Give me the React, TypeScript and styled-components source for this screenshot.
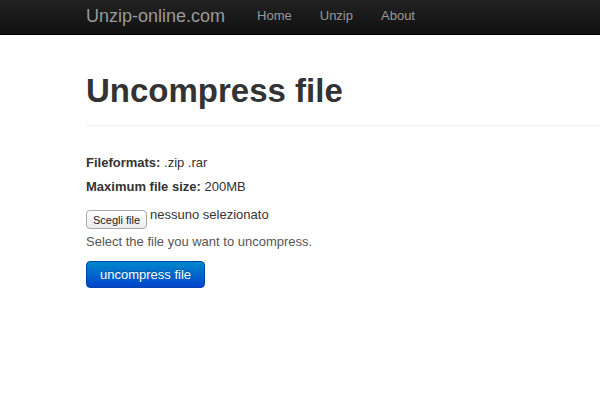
import styled, { createGlobalStyle } from 'styled-components';

const GlobalStyle = createGlobalStyle`
  html, body {
    margin: 0;
    padding: 0;
    background: #fff;
  }
  body {
    font-family: "Liberation Sans", Arial, sans-serif;
    font-size: 13px;
    line-height: 20px;
    color: #333;
  }
`;

const Navbar = styled.div`
  height: 34px;
  background: linear-gradient(to bottom, #222 0%, #111 100%);
  border-bottom: 1px solid #000;
  display: flex;
  align-items: center;
  padding-left: 86px;
`;

const Brand = styled.a`
  color: #999;
  font-size: 18px;
  font-weight: 200;
  text-decoration: none;
  margin-right: 18px;
  padding-bottom: 3px;
`;

const NavLink = styled.a`
  color: #999;
  font-size: 13px;
  text-decoration: none;
  padding: 0 14px 3px;
`;

const Container = styled.div`
  padding-left: 86px;
`;

const PageHeader = styled.div`
  padding: 36px 0 14px;
  border-bottom: 1px solid #eee;
  margin-bottom: 27px;
`;

const Title = styled.h1`
  margin: 0;
  font-size: 33px;
  line-height: 40px;
  font-weight: bold;
  color: #333;
`;

const Info = styled.p`
  margin: 0 0 4px;
`;

const FileRow = styled.div`
  display: flex;
  align-items: flex-start;
  margin-top: 10px;
`;

const FileButton = styled.button`
  font-family: "Liberation Sans", Arial, sans-serif;
  font-size: 11px;
  height: 19px;
  padding: 0 6px;
  margin-top: 3px;
  background: linear-gradient(to bottom, #fff 0%, #ececec 100%);
  border: 1px solid #aaa;
  border-radius: 4px;
  color: #222;
`;

const FileLabel = styled.span`
  margin-left: 3px;
  line-height: 16px;
`;

const Help = styled.p`
  margin: 3px 0 9px;
  color: #555;
`;

const PrimaryButton = styled.button`
  font-family: "Liberation Sans", Arial, sans-serif;
  font-size: 13px;
  height: 27px;
  padding: 0 13px;
  color: #fff;
  background: linear-gradient(to bottom, #0088cc 0%, #0044cc 100%);
  border: 1px solid #0044aa;
  border-radius: 4px;
  text-shadow: 0 -1px 0 rgba(0, 0, 0, 0.25);
`;

export default function App() {
  return (
    <>
      <GlobalStyle />
      <Navbar>
        <Brand href="#">Unzip-online.com</Brand>
        <NavLink href="#">Home</NavLink>
        <NavLink href="#">Unzip</NavLink>
        <NavLink href="#">About</NavLink>
      </Navbar>
      <Container>
        <PageHeader>
          <Title>Uncompress file</Title>
        </PageHeader>
        <Info>
          <b>Fileformats:</b> .zip .rar
        </Info>
        <Info>
          <b>Maximum file size:</b> 200MB
        </Info>
        <FileRow>
          <FileButton>Scegli file</FileButton>
          <FileLabel>nessuno selezionato</FileLabel>
        </FileRow>
        <Help>Select the file you want to uncompress.</Help>
        <PrimaryButton>uncompress file</PrimaryButton>
      </Container>
    </>
  );
}
